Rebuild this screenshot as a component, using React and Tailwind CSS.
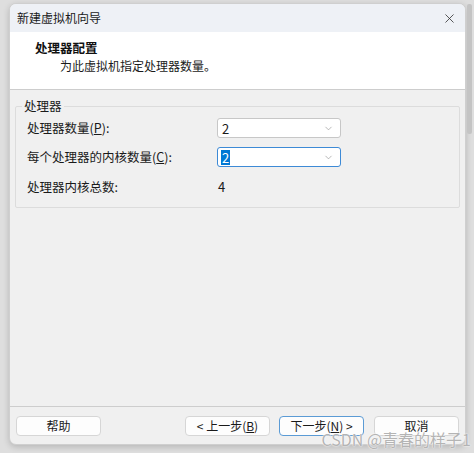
import { X, ChevronDown } from "lucide-react";

const font = { fontFamily: '"Noto Sans CJK SC", "Noto Sans", sans-serif' };

const Select = ({ value, focused }) => (
    <div
        className={`flex items-center justify-between w-[124px] h-[20px] bg-white rounded-[3px] border pl-[3px] pr-[6px] ${
            focused ? "border-[#3d8ad6]" : "border-[#c7c7c7]"
        }`}
    >
        <span
            className={`text-[13px] leading-[15px] px-[1px] ${
                focused ? "bg-[#0078d4] text-white" : "text-[#1a1a1a]"
            }`}
        >
            {value}
        </span>
        <ChevronDown size={11} strokeWidth={1.3} className="text-[#8a8a8a]" />
    </div>
);

const Button = ({ children, primary }) => (
    <button
        className={`h-[20px] w-[85px] bg-[#fdfdfd] rounded-[4px] border text-[12px] text-[#1a1a1a] flex items-center justify-center ${
            primary ? "border-[#5b9bd5]" : "border-[#d6d6d6]"
        }`}
    >
        {children}
    </button>
);

export default function App() {
    return (
        <div className="relative w-[474px] h-[453px] bg-[#dedede] flex overflow-hidden" style={font}>
            <div className="mt-[3px] ml-[9px] w-[457px] h-[442px] flex flex-col rounded-[7px] border border-[#cfcfcf] bg-[#f0f0f0] overflow-hidden shadow-[0_2px_6px_rgba(0,0,0,0.18)]">
                {/* title bar */}
                <div className="h-[28px] shrink-0 bg-[#eef1f6] flex items-center justify-between pl-[7px] pr-[8px]">
                    <span className="text-[12px] text-[#1a1a1a]">新建虚拟机向导</span>
                    <X size={15} strokeWidth={1.3} className="text-[#333]" />
                </div>

                {/* header */}
                <div className="h-[58px] shrink-0 bg-white border-b border-[#cdcdcd] pl-[25px] pt-[7px]">
                    <p className="text-[12.5px] font-bold leading-[18px] text-[#111]">处理器配置</p>
                    <p className="text-[12px] leading-[18px] text-[#1a1a1a] pl-[25px]">为此虚拟机指定处理器数量。</p>
                </div>

                {/* body */}
                <div className="flex-1 px-[5px] pt-[8px]">
                    <fieldset className="border border-[#dcdcdc] rounded-[2px] pl-[11px] pr-[10px] pt-[4px] pb-[10px]">
                        <legend className="ml-[-5px] px-[2px] text-[12.5px] leading-[16px] text-[#1a1a1a]">处理器</legend>
                        <div className="flex flex-col text-[12.5px] text-[#1a1a1a]">
                            <div className="flex items-center h-[20px]">
                                <span className="w-[190px]">
                                    处理器数量(<span className="underline">P</span>):
                                </span>
                                <Select value="2" />
                            </div>
                            <div className="flex items-center h-[20px] mt-[9px]">
                                <span className="w-[190px]">
                                    每个处理器的内核数量(<span className="underline">C</span>):
                                </span>
                                <Select value="2" focused />
                            </div>
                            <div className="flex items-center h-[20px] mt-[10px]">
                                <span className="w-[191px]">处理器内核总数:</span>
                                <span className="text-[13px]">4</span>
                            </div>
                        </div>
                    </fieldset>
                </div>

                {/* footer */}
                <div className="h-[38px] shrink-0 border-t border-[#cdcdcd] flex items-start pt-[9px] px-[6px]">
                    <Button>帮助</Button>
                    <div className="ml-auto flex gap-[9px]">
                        <Button>
                            &lt; 上一步(<span className="underline">B</span>)
                        </Button>
                        <Button primary>
                            下一步(<span className="underline">N</span>) &gt;
                        </Button>
                        <div className="ml-[1px]">
                            <Button>取消</Button>
                        </div>
                    </div>
                </div>
            </div>

            {/* scrollbar strip behind window */}
            <div className="ml-[1px] mt-[4px] w-[5px] h-[130px] bg-[#c4c4c4] rounded-[2px]" />

            {/* watermark */}
            <span className="absolute right-[3px] top-[429px] text-[16px] leading-[20px] text-[#b4b4b4] [text-shadow:0_0_1px_#fff,0_0_2px_#fff]">
                CSDN @青春的样子1
            </span>
        </div>
    );
}
